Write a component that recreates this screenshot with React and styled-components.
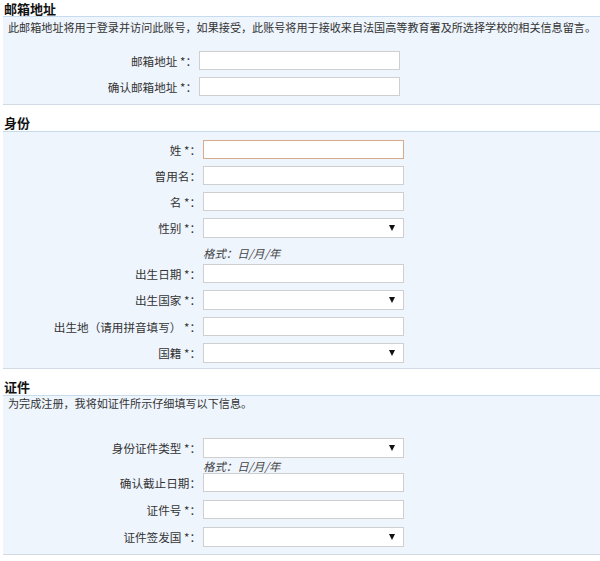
import styled, { createGlobalStyle } from 'styled-components'

const GlobalStyle = createGlobalStyle`
  body {
    margin: 0;
    background: #fff;
    color: #333;
    font-family: "Noto Sans CJK SC", "Liberation Sans", sans-serif;
    font-size: 11px;
  }
`

const Page = styled.div`
  width: 600px;
  overflow: hidden;
`

const SectionTitle = styled.h3`
  margin: 0;
  padding: ${p => p.$top || 0}px 0 0 4px;
  font-size: 13px;
  font-weight: bold;
  line-height: ${p => p.$lh || 16}px;
  color: #111;
`

const Panel = styled.div`
  margin-left: 3px;
  background: #eef5fd;
  border-top: 1px solid #c7dbef;
  border-bottom: 1px solid #d2dbe4;
  padding: ${p => p.$top || 0}px 0 ${p => p.$bottom || 0}px 0;
`

const Note = styled.p`
  margin: 0;
  padding-left: 5px;
  line-height: 14px;
  font-size: 11.1px;
  white-space: nowrap;
`

const Row = styled.div`
  display: flex;
  align-items: center;
  margin-top: ${p => p.$top ?? 7}px;
`

const Label = styled.label`
  width: ${p => p.$width}px;
  box-sizing: border-box;
  padding-right: 2px;
  text-align: right;
  white-space: nowrap;
  font-size: 11.6px;
  line-height: 14px;
`

const TextInput = styled.input`
  box-sizing: border-box;
  width: 201px;
  height: 19px;
  margin: 0;
  padding: 0 3px;
  background: #fff;
  border: 1px solid ${p => (p.$focus ? '#d9a98c' : '#cfcfcf')};
  border-radius: 0;
  outline: none;
  font: inherit;
`

const SelectWrap = styled.div`
  position: relative;
  width: 201px;
  height: 20px;
`

const Select = styled.select`
  appearance: none;
  box-sizing: border-box;
  width: 100%;
  height: 100%;
  margin: 0;
  background: #fff;
  border: 1px solid #cfcfcf;
  border-radius: 0;
  font: inherit;
`

const Arrow = styled.span`
  position: absolute;
  right: 9px;
  top: 7px;
  width: 0;
  height: 0;
  border-left: 3px solid transparent;
  border-right: 3px solid transparent;
  border-top: 6px solid #111;
  pointer-events: none;
`

const Hint = styled.div`
  margin: ${p => p.$top || 0}px 0 0 ${p => p.$left}px;
  font-style: italic;
  font-size: 11.4px;
  color: #444;
  line-height: 14px;
`

function Field({ label, width, select, focus, top }) {
  return (
    <Row $top={top}>
      <Label $width={width}>{label}</Label>
      {select ? (
        <SelectWrap>
          <Select defaultValue="">
            <option value=""></option>
          </Select>
          <Arrow />
        </SelectWrap>
      ) : (
        <TextInput type="text" $focus={focus} />
      )}
    </Row>
  )
}

export default function App() {
  return (
    <Page>
      <GlobalStyle />

      <SectionTitle $top={1} $lh={15}>邮箱地址</SectionTitle>
      <Panel $top={3} $bottom={8}>
        <Note>此邮箱地址将用于登录并访问此账号，如果接受，此账号将用于接收来自法国高等教育署及所选择学校的相关信息留言。</Note>
        <Field label="邮箱地址 *：" width={196} top={17} />
        <Field label="确认邮箱地址 *：" width={196} />
      </Panel>

      <SectionTitle $top={10}>身份</SectionTitle>
      <Panel $top={8} $bottom={5}>
        <Field label="姓 *：" width={200} top={0} focus />
        <Field label="曾用名：" width={200} />
        <Field label="名 *：" width={200} />
        <Field label="性别 *：" width={200} select />
        <Hint $top={8} $left={200}>格式：日/月/年</Hint>
        <Field label="出生日期 *：" width={200} top={4} />
        <Field label="出生国家 *：" width={200} select />
        <Field label="出生地（请用拼音填写） *：" width={200} />
        <Field label="国籍 *：" width={200} select />
      </Panel>

      <SectionTitle $top={10}>证件</SectionTitle>
      <Panel $top={0} $bottom={7}>
        <Note>为完成注册，我将如证件所示仔细填写以下信息。</Note>
        <Field label="身份证件类型 *：" width={200} select top={28} />
        <Hint $top={1} $left={200}>格式：日/月/年</Hint>
        <Field label="确认截止日期：" width={200} top={0} />
        <Field label="证件号 *：" width={200} top={8} />
        <Field label="证件签发国 *：" width={200} select top={8} />
      </Panel>
    </Page>
  )
}
